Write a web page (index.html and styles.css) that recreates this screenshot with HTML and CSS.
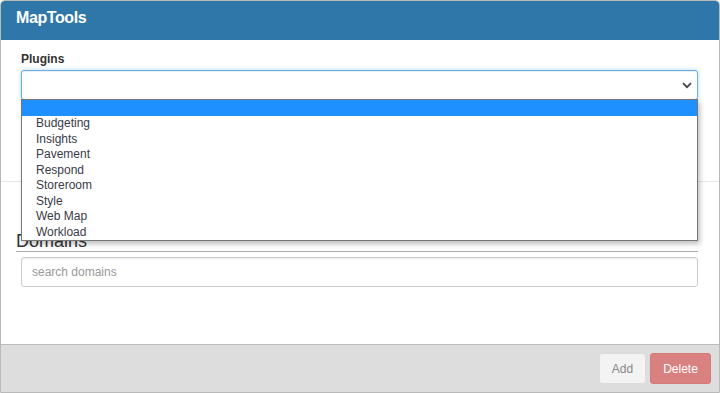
FILE: index.html
```html
<!DOCTYPE html>
<html lang="en">
<head>
<meta charset="utf-8">
<title>MapTools</title>
<link rel="stylesheet" href="styles.css">
</head>
<body>
<div class="panel">
  <div class="panel-header">MapTools</div>
  <div class="panel-body">
    <div class="plugin-section">
      <label class="field-label">Plugins</label>
      <div class="select-wrap">
        <div class="select-box">
          <svg class="chevron" width="10" height="7" viewBox="0 0 10 7"><path d="M1 1.2 L5 5.2 L9 1.2" fill="none" stroke="#444" stroke-width="1.8"/></svg>
        </div>
        <ul class="dropdown">
          <li class="opt selected">&nbsp;</li>
          <li class="opt">Budgeting</li>
          <li class="opt">Insights</li>
          <li class="opt">Pavement</li>
          <li class="opt">Respond</li>
          <li class="opt">Storeroom</li>
          <li class="opt">Style</li>
          <li class="opt">Web Map</li>
          <li class="opt">Workload</li>
        </ul>
      </div>
    </div>
    <div class="domains-section">
      <h3 class="domains-title">Domains</h3>
      <input class="search" type="text" placeholder="search domains">
    </div>
  </div>
  <div class="panel-footer">
    <button class="btn btn-add">Add</button>
    <button class="btn btn-delete">Delete</button>
  </div>
</div>
</body>
</html>
```
FILE: styles.css
```css
html, body {
  margin: 0;
  padding: 0;
  background: #fff;
}
body {
  font-family: "Liberation Sans", Arial, sans-serif;
  color: #333;
}
.panel {
  width: 720px;
  height: 393px;
  box-sizing: border-box;
  border: 1px solid #b9b9b9;
  border-radius: 5px 5px 0 0;
  display: flex;
  flex-direction: column;
  overflow: hidden;
}
.panel-header {
  height: 39px;
  background: #2f77a9;
  color: #fff;
  font-weight: bold;
  font-size: 16px;
  letter-spacing: -0.4px;
  line-height: 18px;
  padding: 8px 15px 0;
  box-sizing: border-box;
}
.panel-body {
  flex: 1;
  display: flex;
  flex-direction: column;
}
.plugin-section {
  padding: 12px 21px 81px 20px;
  border-bottom: 1px solid #e6e6e6;
}
.field-label {
  display: block;
  font-size: 12px;
  font-weight: bold;
  line-height: 14px;
  margin-bottom: 4px;
  color: #333;
}
.select-wrap {
  position: relative;
}
.select-box {
  height: 30px;
  box-sizing: border-box;
  border: 1px solid #66afe9;
  border-radius: 3px;
  box-shadow: inset 0 1px 1px rgba(0,0,0,0.075), 0 0 4px rgba(102,175,233,0.5);
  display: flex;
  align-items: center;
  justify-content: flex-end;
  padding-right: 5px;
  background: #fff;
}
.chevron {
  display: block;
}
.dropdown {
  position: absolute;
  left: 0;
  right: 0;
  top: 29px;
  margin: 0;
  padding: 0;
  list-style: none;
  background: #fff;
  border: 1px solid #777;
  box-shadow: 2px 3px 5px rgba(0,0,0,0.25);
  z-index: 5;
}
.opt {
  height: 15.5px;
  line-height: 15.5px;
  font-size: 12px;
  padding-left: 14px;
  color: #3a3a48;
}
.opt.selected {
  background: #1e90ff;
  height: 16px;
}
.domains-section {
  padding: 49px 21px 0 15px;
}
.domains-title {
  margin: 0;
  font-size: 18px;
  font-weight: normal;
  line-height: 20px;
  color: #333;
  border-bottom: 1px solid #aaa;
}
.search {
  display: block;
  margin: 5px 0 0 5px;
  width: calc(100% - 5px);
  height: 30px;
  box-sizing: border-box;
  border: 1px solid #ccc;
  border-radius: 3px;
  padding: 0 10px;
  font-family: "Liberation Sans", Arial, sans-serif;
  font-size: 12px;
  color: #555;
  box-shadow: inset 0 1px 1px rgba(0,0,0,0.075);
}
.search::placeholder {
  color: #999;
}
.panel-footer {
  height: 48px;
  box-sizing: border-box;
  border-top: 1px solid #bbb;
  background: #dddddd;
  display: flex;
  justify-content: flex-end;
  align-items: flex-start;
  gap: 4px;
  padding: 8px 8px 0 0;
}
.btn {
  height: 31px;
  border-radius: 3px;
  font-family: "Liberation Sans", Arial, sans-serif;
  font-size: 12px;
  padding: 0;
  cursor: pointer;
}
.btn-add {
  width: 47px;
  background: #f3f3f3;
  border: 1px solid #dcdcdc;
  color: #888;
}
.btn-delete {
  width: 61px;
  background: #d98180;
  border: 1px solid #d47a79;
  color: #fff;
}
```
